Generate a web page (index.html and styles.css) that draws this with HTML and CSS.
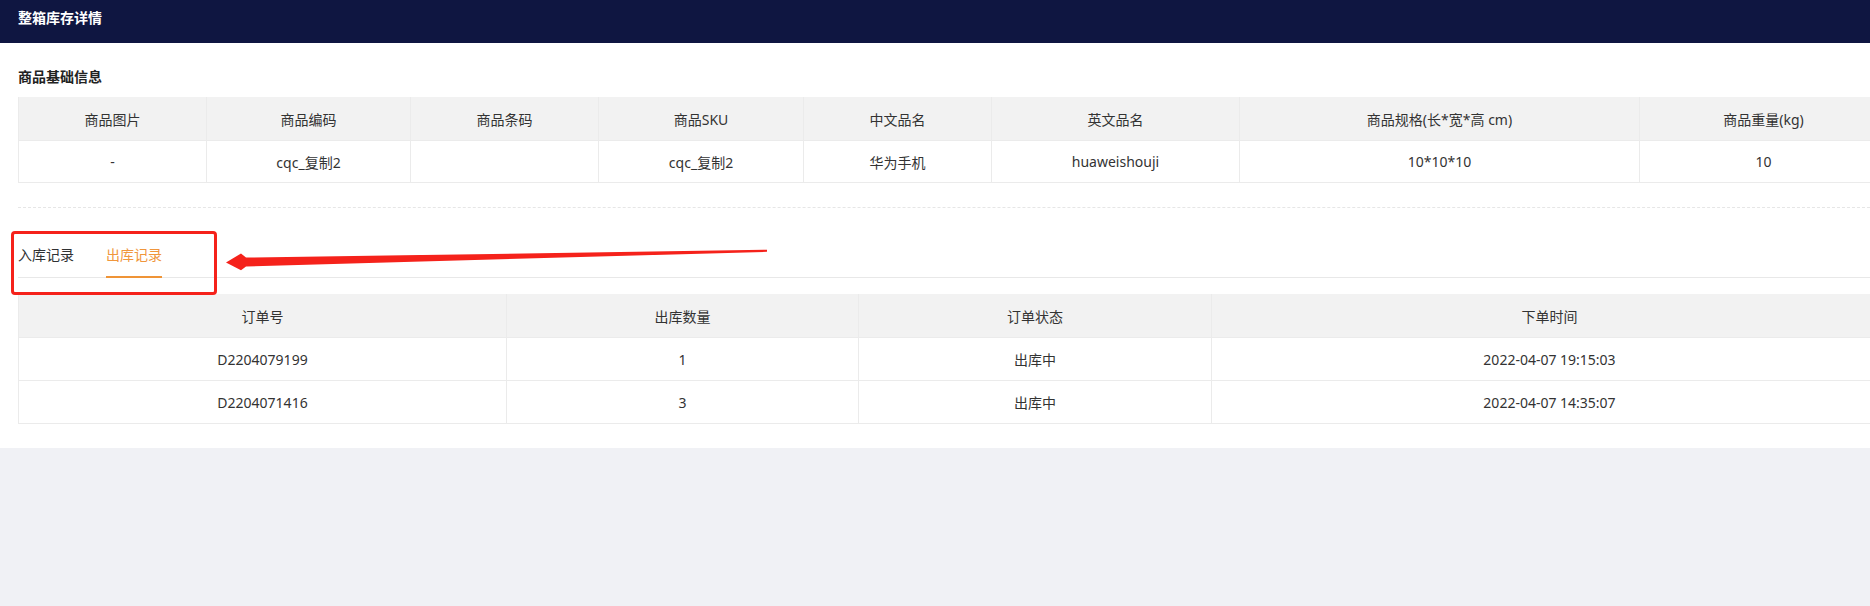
FILE: index.html
```html
<!DOCTYPE html>
<html lang="zh-CN">
<head>
<meta charset="utf-8">
<title>整箱库存详情</title>
<link rel="stylesheet" href="styles.css">
</head>
<body>
<div class="page">
  <header class="topbar">整箱库存详情</header>
  <main class="panel">
    <h2 class="section-title">商品基础信息</h2>
    <table class="grid grid-info">
      <colgroup>
        <col style="width:188px"><col style="width:204px"><col style="width:188px"><col style="width:205px">
        <col style="width:188px"><col style="width:248px"><col style="width:400px"><col style="width:248px">
      </colgroup>
      <thead>
        <tr><th>商品图片</th><th>商品编码</th><th>商品条码</th><th>商品SKU</th><th>中文品名</th><th>英文品名</th><th>商品规格(长*宽*高 cm)</th><th>商品重量(kg)</th></tr>
      </thead>
      <tbody>
        <tr><td>-</td><td>cqc_复制2</td><td></td><td>cqc_复制2</td><td>华为手机</td><td>huaweishouji</td><td>10*10*10</td><td>10</td></tr>
      </tbody>
    </table>
    <div class="divider"></div>
    <nav class="tabs">
      <span class="tab">入库记录</span>
      <span class="tab active">出库记录</span>
    </nav>
    <table class="grid grid-orders">
      <colgroup>
        <col style="width:488px"><col style="width:352px"><col style="width:353px"><col style="width:676px">
      </colgroup>
      <thead>
        <tr><th>订单号</th><th>出库数量</th><th>订单状态</th><th>下单时间</th></tr>
      </thead>
      <tbody>
        <tr><td>D2204079199</td><td>1</td><td>出库中</td><td>2022-04-07 19:15:03</td></tr>
        <tr><td>D2204071416</td><td>3</td><td>出库中</td><td>2022-04-07 14:35:07</td></tr>
      </tbody>
    </table>
  </main>
  <div class="mark-box"></div>
  <svg class="mark-arrow" width="1870" height="606" viewBox="0 0 1870 606" xmlns="http://www.w3.org/2000/svg">
    <polygon points="226,262.5 241,253.5 246,257.6 767,249.8 767,251.8 246,266.5 241,270.2" fill="#f5221b"/>
  </svg>
</div>
</body>
</html>
```

FILE: styles.css
```css
html, body {
  margin: 0;
  padding: 0;
  overflow: hidden;
  background: #f0f1f5;
}
body {
  font-family: "Noto Sans", "Noto Sans CJK SC", sans-serif;
  font-size: 14px;
  color: #333;
}
.page {
  position: relative;
  width: 1870px;
  height: 606px;
  overflow: hidden;
}
.topbar {
  height: 43px;
  box-sizing: border-box;
  padding-left: 18px;
  line-height: 36px;
  background: #0f1641;
  color: #fff;
  font-weight: bold;
  font-size: 14px;
}
.panel {
  background: #fff;
  padding: 24px 0 24px 18px;
  display: flex;
  flex-direction: column;
  align-items: flex-start;
}
.section-title {
  margin: 0 0 10px 0;
  font-size: 14px;
  line-height: 20px;
  font-weight: bold;
  color: #222;
}
.grid {
  border-collapse: collapse;
  table-layout: fixed;
  width: 1869px;
  flex: none;
}
.grid th, .grid td {
  padding: 0;
  text-align: center;
  font-weight: normal;
  border: 1px solid #ebebeb;
  white-space: nowrap;
  overflow: hidden;
}
.grid th {
  background: #f2f2f2;
  height: 43px;
  border-top: none;
}
.grid td {
  height: 41px;
}
.grid-orders td {
  height: 42px;
}
.divider {
  width: 1852px;
  margin-top: 24px;
  border-top: 1px dashed #e6e6e6;
}
.tabs {
  margin-top: 27px;
  width: 1852px;
  height: 43px;
  display: flex;
  gap: 32px;
  box-shadow: inset 0 -1px 0 #e8e8e8;
  margin-bottom: 16px;
}
.tab {
  position: relative;
  line-height: 40px;
  color: #303133;
}
.tab.active {
  color: #f0963c;
}
.tab.active::after {
  content: "";
  position: absolute;
  left: 0;
  right: 0;
  bottom: 0;
  height: 2px;
  background: #ef9436;
}
.mark-box {
  position: absolute;
  left: 11px;
  top: 231px;
  width: 206px;
  height: 64px;
  box-sizing: border-box;
  border: 3px solid #f5221b;
  border-radius: 4px;
}
.mark-arrow {
  position: absolute;
  left: 0;
  top: 0;
  pointer-events: none;
}
```
